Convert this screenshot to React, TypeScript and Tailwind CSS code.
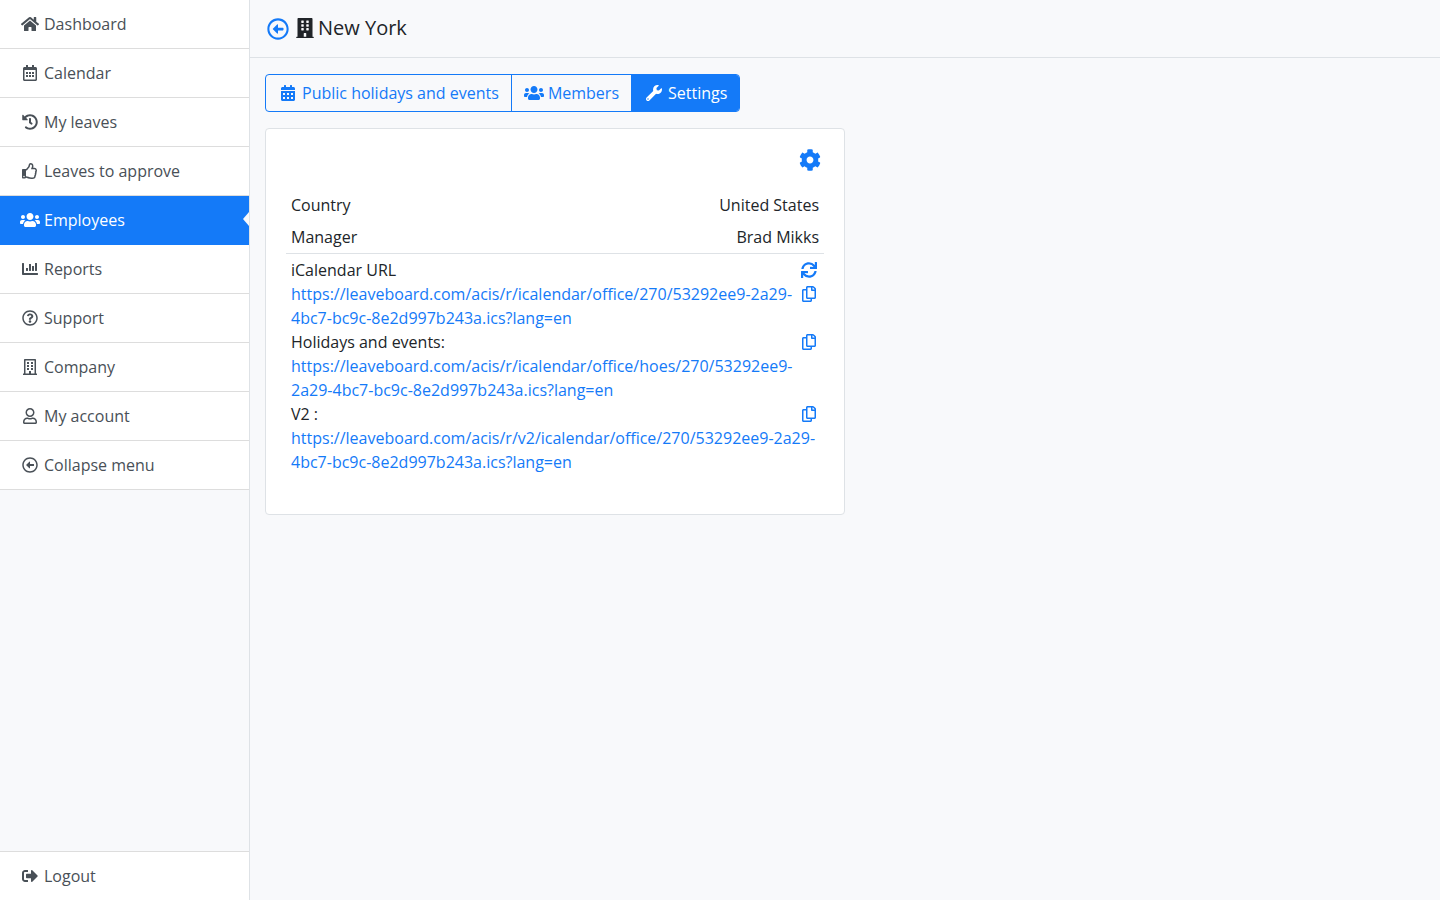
import React from "react";
import {
  FaBuilding,
  FaCalendarAlt,
  FaChartBar,
  FaCog,
  FaHistory,
  FaHome,
  FaRegArrowAltCircleLeft,
  FaRegBuilding,
  FaRegCalendarAlt,
  FaRegCopy,
  FaRegQuestionCircle,
  FaRegThumbsUp,
  FaRegUser,
  FaSignOutAlt,
  FaSync,
  FaUsers,
  FaWrench,
} from "react-icons/fa";

const menuItems = [
  { label: "Dashboard", icon: FaHome },
  { label: "Calendar", icon: FaRegCalendarAlt },
  { label: "My leaves", icon: FaHistory },
  { label: "Leaves to approve", icon: FaRegThumbsUp },
  { label: "Employees", icon: FaUsers, active: true },
  { label: "Reports", icon: FaChartBar },
  { label: "Support", icon: FaRegQuestionCircle },
  { label: "Company", icon: FaRegBuilding },
  { label: "My account", icon: FaRegUser },
  { label: "Collapse menu", icon: FaRegArrowAltCircleLeft },
];

const tabs = [
  { label: "Public holidays and events", icon: FaCalendarAlt },
  { label: "Members", icon: FaUsers },
  { label: "Settings", icon: FaWrench, active: true },
];

const feedBase = "https://leaveboard.com/acis/r";
const feedKey = "53292ee9-2a29-4bc7-bc9c-8e2d997b243a.ics?lang=en";

const Sidebar: React.FC = () => {
  return (
    <nav className="w-[250px] shrink-0 flex flex-col justify-between border-r border-[#dee2e6] text-[#495057]">
      <ul>
        {menuItems.map((item) => {
          const IconComponent = item.icon;
          return (
            <li key={item.label}>
              <a
                href="#"
                className={
                  item.active
                    ? "relative flex items-center gap-1 px-5 py-3 border-b border-[#147af8] bg-[#147af8] text-white"
                    : "flex items-center gap-1 px-5 py-3 border-b border-[#dddddd] bg-white"
                }
              >
                <IconComponent className="w-5 h-4" />
                {item.label}
                {item.active && (
                  <svg
                    viewBox="0 0 6 14"
                    className="absolute right-0 top-4 w-[6px] h-[14px]"
                    fill="#f8f9fb"
                  >
                    <path d="M6 0v14L0 7z" />
                  </svg>
                )}
              </a>
            </li>
          );
        })}
      </ul>

      <a
        href="#"
        className="flex items-center gap-1 px-5 py-3 border-t border-[#dddddd] bg-white"
      >
        <FaSignOutAlt className="w-5 h-4" />
        Logout
      </a>
    </nav>
  );
};

const CopyButton: React.FC = () => {
  return (
    <button aria-label="Copy URL" className="float-right p-1 mr-[-2px] text-[#147af8] cursor-pointer">
      <FaRegCopy className="w-4 h-4" />
    </button>
  );
};

const FeedLink: React.FC<{ path: string }> = ({ path }) => {
  const url = `${feedBase}/${path}/${feedKey}`;
  // allow a line break after each dash of the key
  const parts = url.split("-");
  return (
    <a href={url} className="text-[#147af8] hover:underline">
      {parts.map((part, idx) => (
        <React.Fragment key={idx}>
          {part}
          {idx < parts.length - 1 && (
            <>
              -<wbr />
            </>
          )}
        </React.Fragment>
      ))}
    </a>
  );
};

const OfficeCard: React.FC = () => {
  return (
    <section className="w-full max-w-[580px] px-5 pt-5 pb-9 bg-white border border-[#dee2e6] rounded">
      <div className="flex justify-end px-[3px] pb-[18px]">
        <button aria-label="Edit office" className="text-[#147af8] cursor-pointer">
          <FaCog className="w-[22px] h-[22px]" />
        </button>
      </div>

      <table className="w-full">
        <tbody>
          <tr>
            <th scope="row" className="p-1 pl-[5px] text-left font-normal">Country</th>
            <td className="p-1 pr-[5px] text-right">United States</td>
          </tr>
          <tr>
            <th scope="row" className="p-1 pl-[5px] text-left font-normal">Manager</th>
            <td className="p-1 pr-[5px] text-right">Brad Mikks</td>
          </tr>
        </tbody>
      </table>

      <div className="border-t border-[#dee2e6] px-[5px] py-1">
        <div className="flex items-center justify-between">
          <span>iCalendar URL</span>
          <button aria-label="Reset URL" className="p-[2px] text-[#147af8] cursor-pointer">
            <FaSync className="w-4 h-4" />
          </button>
        </div>
        <div>
          <CopyButton />
          <FeedLink path="icalendar/office/270" />
        </div>
        <div>
          <CopyButton />
          Holidays and events:
          <br />
          <FeedLink path="icalendar/office/hoes/270" />
        </div>
        <div>
          <CopyButton />
          V2 :
          <br />
          <FeedLink path="v2/icalendar/office/270" />
        </div>
      </div>
    </section>
  );
};

export default function App() {
  return (
    <div className="min-h-screen flex bg-[#f8f9fb] text-base text-[#212529] font-['Open_Sans',sans-serif]">
      <Sidebar />

      <main className="flex-1 min-w-0">
        <header className="flex items-center h-[58px] px-[15px] border-b border-[#dee2e6]">
          <a href="#" aria-label="Back" className="px-[2px] text-[#147af8]">
            <FaRegArrowAltCircleLeft className="w-[22px] h-[22px]" />
          </a>
          <h1 className="flex items-center gap-[3px] pl-1 pb-[2px] text-xl">
            <FaBuilding className="w-5 h-5" />
            New York
          </h1>
        </header>

        <div className="px-[15px] py-4">
          <div className="inline-flex mb-4 border border-[#147af8] rounded overflow-hidden divide-x divide-[#147af8]">
            {tabs.map((tab) => {
              const IconComponent = tab.icon;
              return (
                <button
                  key={tab.label}
                  className={
                    tab.active
                      ? "flex items-center gap-1 px-3 py-[6px] bg-[#147af8] text-white cursor-pointer"
                      : "flex items-center gap-1 px-3 py-[6px] text-[#147af8] cursor-pointer"
                  }
                >
                  <IconComponent className="w-5 h-4" />
                  {tab.label}
                </button>
              );
            })}
          </div>

          <OfficeCard />
        </div>
      </main>
    </div>
  );
}
